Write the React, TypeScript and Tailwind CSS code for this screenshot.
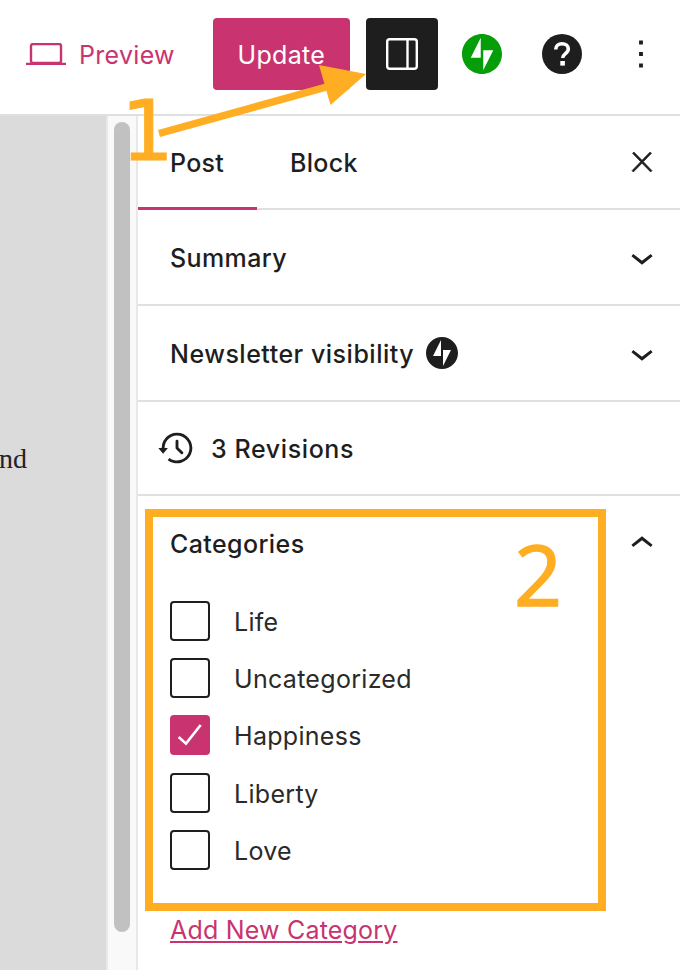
const PINK = "#c93470";

function Chevron({ up = false }: { up?: boolean }) {
  return (
    <svg viewBox="0 0 24 24" className={`w-[46px] h-[46px] fill-[#1e1e1e] ${up ? "rotate-180" : ""}`}>
      <path d="M17.5 11.6L12 16l-5.500-4.400.9-1.200L12 14l4.600-3.600z" />
    </svg>
  );
}

function JetpackIcon({ color, className }: { color: string; className: string }) {
  return (
    <svg viewBox="0 0 32 32" className={className}>
      <path
        fill={color}
        fillRule="evenodd"
        d="M16 0C7.200 0 0 7.200 0 16s7.200 16 16 16 16-7.200 16-16S24.800 0 16 0zM15 19H7l8-16v16zM17 29V13h8L17 29z"
      />
    </svg>
  );
}

function Row({ children, height }: { children: React.ReactNode; height: string }) {
  return (
    <div className={`flex items-center justify-between pl-[32px] pr-[15px] border-b-2 border-[#e0e0e0] ${height}`}>
      {children}
    </div>
  );
}

function CategoryCheck({ label, checked = false, top }: { label: string; checked?: boolean; top: string }) {
  return (
    <div className={`flex items-center h-[40px] ${top}`}>
      {checked ? (
        <span className="w-[40px] h-[40px] rounded-[4px] flex items-center justify-center" style={{ background: PINK }}>
          <svg viewBox="0 0 24 24" className="w-[32px] h-[32px] fill-none stroke-white stroke-[2px]">
            <path d="M3.500 13.500l5.500 5L20 4.500" />
          </svg>
        </span>
      ) : (
        <span className="w-[40px] h-[40px] rounded-[4px] border-2 border-[#1e1e1e] bg-white" />
      )}
      <span className="ml-[24px] pt-[4px] text-[25px] text-[#2a2a2a] tracking-[0.3px]">{label}</span>
    </div>
  );
}

export default function App() {
  return (
    <div className="relative w-[680px] h-[970px] overflow-hidden bg-white font-['Inter',sans-serif] flex flex-col">
      {/* top bar */}
      <div className="h-[116px] shrink-0 border-b-2 border-[#e0e0e0] flex items-center pb-[7px]">
        <svg viewBox="0 0 40 22" className="ml-[26px] w-[40px] h-[22px] fill-none stroke-[#c93470]">
          <rect x="5" y="1" width="30" height="19" rx="2" strokeWidth="2.400" />
          <path d="M0 21h40" strokeWidth="2.600" />
        </svg>
        <span className="ml-[13px] pt-[4px] text-[25px] text-[#c93470] tracking-[0.3px]">Preview</span>
        <button className="ml-[38px] w-[137px] h-[72px] pt-[4px] rounded-[4px] bg-[#c93470] text-white text-[25px] tracking-[0.3px]">
          Update
        </button>
        <button className="ml-[16px] w-[72px] h-[72px] rounded-[4px] bg-[#1e1e1e] flex items-center justify-center">
          <svg viewBox="0 0 32 32" className="w-[32px] h-[32px] fill-none stroke-white stroke-[2.400px]">
            <rect x="1.200" y="1.200" width="29.600" height="29.600" rx="2.500" />
            <path d="M21.500 1.200v29.600" />
          </svg>
        </button>
        <JetpackIcon color="#069e08" className="ml-[24px] w-[40px] h-[40px]" />
        <svg viewBox="0 0 40 40" className="ml-[40px] w-[40px] h-[40px]">
          <circle cx="20" cy="20" r="20" fill="#1e1e1e" />
          <path d="M13.700 15.500c0-3.600 2.700-5.700 6.300-5.700s6.300 2 6.300 5.200c0 4.700-5.600 4.400-5.600 9" fill="none" stroke="#fff" strokeWidth="3.600" />
          <rect x="18.300" y="27" width="4.600" height="4.600" fill="#fff" />
        </svg>
        <svg viewBox="0 0 24 24" className="ml-[36px] w-[46px] h-[46px] fill-[#1e1e1e]">
          <path d="M13 19h-2v-2h2v2zm0-6h-2v-2h2v2zm0-6h-2V5h2v2z" />
        </svg>
      </div>

      <div className="flex flex-1 min-h-0">
        {/* canvas */}
        <div className="w-[106px] shrink-0 bg-[#dbdbdb] pt-[327px] overflow-hidden">
          <div className="font-['Liberation_Serif',serif] text-[28px] leading-[32px] text-[#222] -ml-[1px]">nd</div>
        </div>
        {/* scrollbar */}
        <div className="w-[32px] shrink-0 bg-[#f9f9f9] border-l-2 border-r-2 border-[#e8e8e8] pt-[6px] pl-[6px]">
          <div className="w-[16px] h-[810px] rounded-full bg-[#c1c1c1]" />
        </div>
        {/* sidebar */}
        <div className="flex-1 flex flex-col">
          <div className="h-[94px] border-b-2 border-[#e0e0e0] flex items-stretch pr-[22px]">
            <div className="w-[119px] pl-[32px] pt-[4px] flex items-center border-b-[3px] border-[#c93470] -mb-[2px] text-[25px] font-[450] text-[#1e1e1e] tracking-[0.3px]">
              Post
            </div>
            <div className="ml-[33px] pt-[4px] flex items-center text-[25px] font-[450] text-[#1e1e1e] tracking-[0.3px]">Block</div>
            <div className="ml-auto flex items-center">
              <svg viewBox="0 0 24 24" className="w-[32px] h-[32px] fill-[#1e1e1e] stroke-[#1e1e1e] stroke-[0.5px]">
                <path d="M13 11.800l6.100-6.300-1-1-6.100 6.200-6.100-6.200-1 1 6.100 6.300-6.500 6.700 1 1 6.500-6.600 6.500 6.600 1-1z" />
              </svg>
            </div>
          </div>
          <Row height="h-[96px]">
            <span className="pt-[4px] text-[25px] font-[450] text-[#1e1e1e] tracking-[0.4px]">Summary</span>
            <Chevron />
          </Row>
          <Row height="h-[96px]">
            <span className="flex items-center gap-[12px] text-[25px] font-[450] text-[#1e1e1e] tracking-[0.5px]">
              <span className="pt-[4px]">Newsletter visibility</span>
              <JetpackIcon color="#1e1e1e" className="w-[32px] h-[32px]" />
            </span>
            <Chevron />
          </Row>
          <div className="h-[94px] border-b-2 border-[#e0e0e0] flex items-center pl-[16px]">
            <svg viewBox="0 0 24 24" className="w-[46px] h-[46px] fill-[#1e1e1e]">
              <path d="M5.500 12h1.750l-2.500 3-2.500-3H4a8 8 0 113.134 6.350l.907-1.194A6.500 6.500 0 105.500 12zm9.530 1.970l-2.280-2.280V8.500a.75.75 0 00-1.500 0V12a.747.747 0 00.218.529l2.500 2.500a.75.75 0 101.062-1.059z" />
            </svg>
            <span className="ml-[11px] pt-[4px] text-[25px] font-medium text-[#1e1e1e] tracking-[0.6px]">3 Revisions</span>
          </div>
          <div className="pl-[32px] pr-[15px] flex-1">
            <div className="flex items-center justify-between h-[96px]">
              <span className="pt-[2px] text-[25px] font-[450] text-[#1e1e1e] tracking-[0.4px]">Categories</span>
              <Chevron up />
            </div>
            <CategoryCheck label="Life" top="mt-[9px]" />
            <CategoryCheck label="Uncategorized" top="mt-[17px]" />
            <CategoryCheck label="Happiness" checked top="mt-[17px]" />
            <CategoryCheck label="Liberty" top="mt-[18px]" />
            <CategoryCheck label="Love" top="mt-[17px]" />
            <a className="block mt-[42px] text-[25px] leading-[36px] text-[#c93470] underline tracking-[0.2px]">Add New Category</a>
          </div>
        </div>
      </div>

      {/* annotations */}
      <svg viewBox="0 0 680 970" className="absolute inset-0 w-[680px] h-[970px] pointer-events-none">
        <path d="M159 133.500L330 86" stroke="#ffad22" strokeWidth="7.500" fill="none" />
        <path d="M319 65L366 74L330.500 105z" fill="#ffad22" />
      </svg>
      <div className="absolute left-[145px] top-[509px] w-[461px] h-[402px] border-[8px] border-[#ffad22] pointer-events-none" />
      <div className="absolute left-[121px] top-[82px] font-['DejaVu_Sans',sans-serif] text-[83px] leading-[100px] text-[#ffad22] [-webkit-text-stroke:1px_#ffad22]">1</div>
      <div className="absolute left-[514px] top-[524px] font-['Open_Sans',sans-serif] font-medium text-[84px] leading-[100px] text-[#ffad22] [-webkit-text-stroke:1.5px_#ffad22]">2</div>
    </div>
  );
}
